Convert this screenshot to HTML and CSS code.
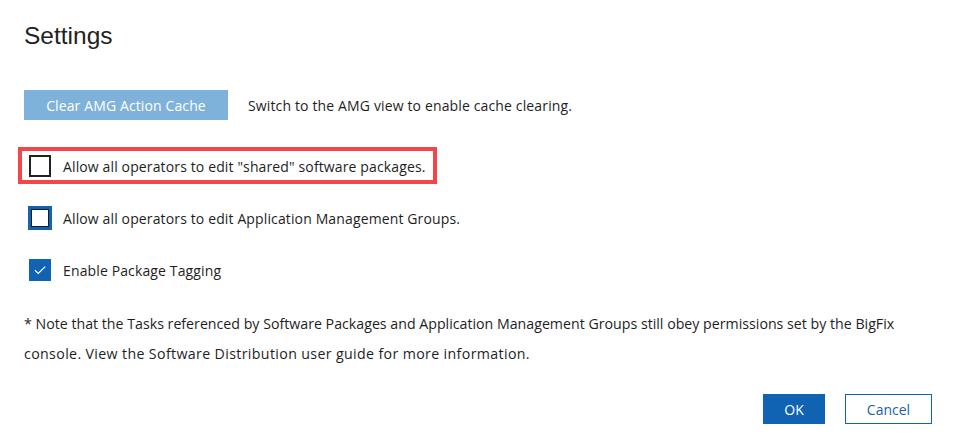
FILE: index.html
```html
<!DOCTYPE html>
<html>
<head>
<meta charset="utf-8">
<link rel="stylesheet" href="styles.css">
</head>
<body>
<div class="dialog">
  <h1 class="title">Settings</h1>
  <div class="cache-row">
    <button class="btn-disabled" disabled>Clear AMG Action Cache</button>
    <span class="hint">Switch to the AMG view to enable cache clearing.</span>
  </div>
  <div class="options">
    <div class="option highlight">
      <span class="box"></span>
      <span class="label">Allow all operators to edit "shared" software packages.</span>
    </div>
    <div class="option">
      <span class="box focused"></span>
      <span class="label">Allow all operators to edit Application Management Groups.</span>
    </div>
    <div class="option">
      <span class="box checked"><svg width="22" height="22" viewBox="0 0 22 22"><path d="M6 11.2 L9.3 14.4 L16.2 7.6" fill="none" stroke="#fff" stroke-width="1.3"/></svg></span>
      <span class="label">Enable Package Tagging</span>
    </div>
  </div>
  <p class="note">* Note that the Tasks referenced by Software Packages and Application Management Groups still obey permissions set by the BigFix<br><span class="note-tail">console. View the Software Distribution user guide for more information.</span></p>
  <div class="actions">
    <button class="btn-primary">OK</button>
    <button class="btn-secondary">Cancel</button>
  </div>
</div>
</body>
</html>
```

FILE: styles.css
```css
html, body {
  margin: 0;
  padding: 0;
  background: #fff;
}
body {
  width: 959px;
  height: 441px;
  overflow: hidden;
  font-family: "Open Sans", "Noto Sans", sans-serif;
  color: #1e1e1e;
}
.dialog {
  padding: 0 24px;
  display: flex;
  flex-direction: column;
}
.title {
  margin: 20px 0 0;
  font-family: "Liberation Sans", Arial, sans-serif;
  font-weight: normal;
  font-size: 24.5px;
  line-height: 32px;
  color: #222;
}
.cache-row {
  margin-top: 38px;
  display: flex;
  align-items: center;
  gap: 20px;
}
.btn-disabled {
  width: 204px;
  height: 30px;
  border: none;
  background: #7fb2db;
  color: #fff;
  font-family: inherit;
  font-size: 14px;
  letter-spacing: 0.12px;
  padding: 0;
}
.hint {
  font-size: 14px;
  letter-spacing: 0.14px;
}
.options {
  margin-top: 35px;
  padding-left: 5px;
  display: flex;
  flex-direction: column;
  align-items: flex-start;
  gap: 30px;
}
.option {
  display: flex;
  align-items: center;
  gap: 12px;
  font-size: 14px;
  letter-spacing: 0.13px;
  height: 22px;
}
.highlight {
  padding: 4px 7px 3px;
  margin: -4px -7px -3px;
  box-shadow: 0 0 0 4px #f44648;
}
.box {
  box-sizing: border-box;
  width: 22px;
  height: 22px;
  border: 2px solid #222;
  background: #fff;
  flex: none;
  display: block;
}
.box.focused {
  border: 2px solid #0f63b2;
  box-shadow: 0 0 0 1px #0f63b2, inset 0 0 0 1px #1a1a1a;
}
.box.checked {
  border: none;
  background: #0f63b2;
}
.box svg {
  display: block;
}
.note {
  margin: 28px 0 0;
  font-family: "Open Sans", "Noto Sans", sans-serif;
  font-size: 14.2px;
  line-height: 30px;
  letter-spacing: 0;
  white-space: nowrap;
}
.note-tail {
  letter-spacing: 0.36px;
}
.actions {
  margin-top: 25px;
  display: flex;
  justify-content: flex-end;
  gap: 20px;
  padding-right: 3px;
}
.btn-primary, .btn-secondary {
  height: 30px;
  font-family: inherit;
  font-size: 14px;
  padding: 0;
}
.btn-primary {
  width: 62px;
  border: none;
  background: #0f63b2;
  color: #fff;
}
.btn-secondary {
  width: 87px;
  border: 1px solid #0f63b2;
  background: #fff;
  color: #1a5fa8;
}
```
